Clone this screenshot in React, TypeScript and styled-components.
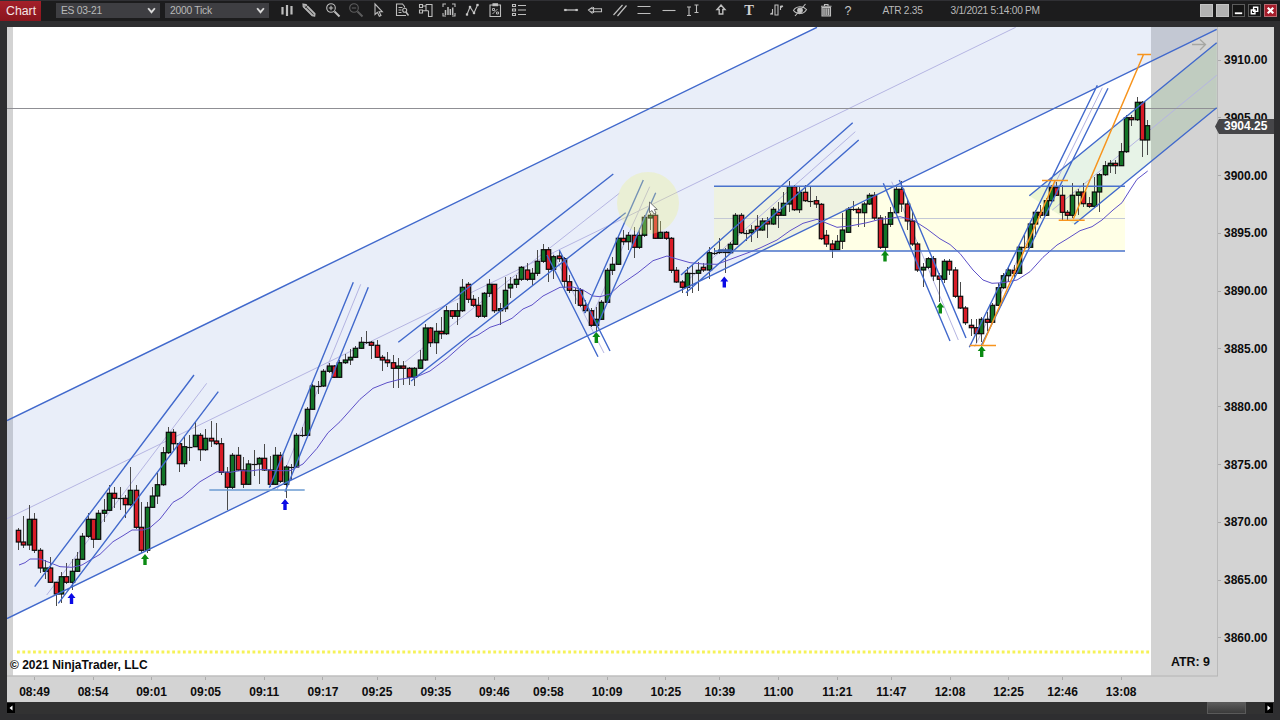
import styled, { createGlobalStyle, css } from "styled-components";
import type { ReactNode } from "react";

type Kind = "g" | "r" | "d";
// kind, wick top, body top, body bottom, wick bottom
type Candle = [Kind, number, number, number, number];
type Line = [number, number, number, number];

const candles: Candle[] = [
  ["r", 528, 530.3, 542, 550], ["r", 516, 542, 545, 548], ["g", 505, 519.3, 545, 550], ["r", 513, 519.3, 550.3, 553],
  ["r", 548, 550.3, 568, 573], ["g", 560, 568, 571.3, 579], ["r", 557, 568, 582.3, 583], ["r", 582, 582.3, 594, 606],
  ["g", 572, 576.7, 594, 603], ["r", 563, 576.7, 582.3, 584], ["g", 559, 571.3, 582.3, 590], ["g", 552, 559.3, 571.3, 572],
  ["g", 533, 536.3, 559.3, 560], ["g", 513, 519.3, 536.3, 538], ["r", 519, 519.3, 539.3, 548], ["g", 510, 513.3, 539.3, 540],
  ["g", 499, 510.3, 513.3, 522], ["g", 485, 493.3, 510.3, 511], ["r", 487, 493.3, 498.3, 508], ["d", 487, 498.3, 498.3, 510],
  ["r", 495, 498.3, 504.7, 518], ["g", 467, 490.3, 504.7, 506], ["r", 485, 490.3, 527.3, 529], ["r", 502, 527.3, 550.3, 553],
  ["g", 502, 507.3, 550.3, 553], ["g", 487, 496, 507.3, 508], ["g", 473, 484.7, 496, 504], ["g", 447, 452.7, 484.7, 486],
  ["g", 427, 432.3, 452.7, 454], ["r", 429, 432.3, 443.7, 450], ["r", 442, 443.7, 463.7, 472], ["g", 437, 446.7, 463.7, 467],
  ["d", 435, 446.7, 446.7, 461], ["g", 422, 435.3, 446.7, 447], ["r", 433, 435.3, 449.7, 461], ["g", 429, 438.3, 449.7, 451],
  ["r", 421, 438.3, 441, 447], ["r", 423, 441, 443.7, 445], ["r", 438, 443.7, 472.3, 475], ["r", 467, 472.3, 487.3, 510],
  ["g", 453, 455.3, 487.3, 489], ["r", 447, 455.3, 470, 471], ["r", 457, 470, 484.3, 488], ["g", 460, 464, 484.3, 485],
  ["d", 450, 464, 464, 476], ["g", 457, 458.3, 464, 484], ["r", 444, 458.3, 470, 471], ["r", 456, 470, 484.3, 487],
  ["g", 447, 455.3, 484.3, 485], ["r", 452, 455.3, 481.3, 483], ["g", 465, 467, 484.3, 498], ["d", 464, 467, 467, 480],
  ["g", 433, 435.3, 467, 468], ["d", 427, 435.3, 435.3, 437], ["g", 407, 409.3, 435.3, 436], ["g", 384, 386, 409.3, 410],
  ["d", 381, 386, 386, 394], ["g", 369, 371.3, 386, 387], ["g", 363, 366, 371.3, 373], ["r", 365, 366, 377.3, 378],
  ["g", 360, 362.7, 377.3, 378], ["g", 354, 360, 362.7, 364], ["g", 349, 357.3, 360, 365], ["g", 346, 348.3, 357.3, 358],
  ["g", 337, 342.3, 348.3, 349], ["d", 331, 342.3, 342.3, 344], ["r", 341, 342.3, 345.3, 359], ["r", 340, 345.3, 357.3, 358],
  ["r", 355, 357.3, 360, 371], ["r", 352, 360, 362.7, 367], ["r", 355, 362.7, 368.3, 388], ["g", 358, 366, 368.3, 388],
  ["r", 361, 366, 368.3, 385], ["r", 367, 368.3, 377.3, 385], ["g", 367, 368.3, 377.3, 386], ["g", 350, 360, 368.3, 369],
  ["g", 324, 328, 360, 361], ["r", 327, 328, 342.7, 347], ["g", 323, 331.3, 342.7, 354], ["r", 317, 331.3, 333.7, 339],
  ["g", 306, 310.7, 333.7, 335], ["r", 310, 310.7, 316.3, 319], ["g", 303, 310.7, 316.3, 325], ["g", 279, 287.3, 310.7, 312],
  ["r", 282, 284.3, 299.3, 303], ["r", 295, 299.3, 305.3, 307], ["r", 297, 305.3, 316.3, 318], ["g", 292, 293.3, 316.3, 318],
  ["g", 279, 284.3, 293.3, 297], ["r", 284, 284.3, 310.7, 313], ["g", 303, 308.7, 310.7, 325], ["g", 277, 290.3, 308.7, 312],
  ["g", 277, 284.3, 288, 298], ["g", 275, 279.3, 284.3, 288], ["g", 266, 267.3, 279.3, 281], ["r", 263, 270, 279.3, 281],
  ["g", 268, 273.3, 279.3, 285], ["g", 250, 261.3, 273.3, 276], ["g", 244, 249.7, 261.3, 263], ["r", 247, 249.7, 269.3, 282],
  ["g", 255, 256.7, 269.3, 279], ["r", 250, 256, 258.7, 262], ["r", 257, 258.7, 281.3, 288], ["r", 275, 281.7, 290.3, 293],
  ["d", 288, 290.3, 290.3, 304], ["r", 288, 290.3, 305.3, 307], ["r", 300, 305.3, 310.7, 313], ["r", 308, 310.7, 325.3, 327],
  ["g", 307, 319.3, 325.3, 332], ["g", 300, 302.3, 319.3, 320], ["g", 268, 270.3, 302.3, 303], ["g", 257, 264.3, 270.3, 275],
  ["g", 236, 238.3, 264.3, 265], ["r", 230, 238.3, 241.7, 245], ["g", 232, 235.3, 241.7, 250], ["r", 227, 235.3, 247.3, 258],
  ["g", 228, 235.3, 247.3, 249], ["g", 215, 217.3, 235.3, 237], ["g", 213, 215.3, 218, 230], ["r", 213, 215.3, 238.3, 239],
  ["g", 221, 232.3, 238.3, 239], ["r", 231, 232.3, 238.3, 240], ["r", 237, 238.3, 270.3, 273], ["r", 267, 270.3, 282, 283],
  ["r", 280, 282, 287.3, 293], ["g", 267, 273.3, 287.3, 296], ["d", 265, 273.3, 273.3, 293], ["g", 262, 270.3, 273.3, 291],
  ["r", 263, 267.3, 270, 272], ["g", 247, 252.7, 270, 279], ["d", 248, 252.7, 252.7, 255], ["d", 238, 252.3, 252.3, 254],
  ["d", 248, 252.3, 252.3, 273], ["g", 242, 244.3, 252.7, 254], ["g", 213, 215.3, 244.3, 245], ["r", 213, 215.3, 232.7, 234],
  ["d", 230, 232.7, 232.7, 241], ["g", 225, 230, 232.7, 242], ["r", 215, 226.3, 230, 238], ["g", 218, 221, 230, 231],
  ["r", 217, 221, 224, 238], ["g", 207, 209.3, 224, 225], ["r", 202, 212.3, 215.3, 228], ["g", 192, 203.3, 215.3, 216],
  ["g", 181, 186.7, 204, 212], ["r", 185, 186.7, 209.7, 211], ["g", 187, 192.3, 209.7, 213], ["r", 185, 192.3, 200.7, 202],
  ["d", 187, 200.7, 200.7, 207], ["r", 196, 200.7, 204, 208], ["r", 203, 204.3, 238.7, 240], ["r", 230, 235.3, 244, 247],
  ["r", 240, 244, 249.7, 258], ["g", 235, 241.3, 249.7, 250], ["g", 213, 230, 241.3, 249], ["g", 207, 209.3, 232.3, 233],
  ["d", 201, 209.3, 209.3, 211], ["r", 207, 209.3, 212.7, 227], ["g", 202, 204, 212.7, 227], ["g", 193, 195.3, 204, 205],
  ["r", 192, 195.3, 218, 220], ["r", 215, 218, 247.3, 249], ["g", 216, 224.3, 247.3, 252], ["g", 207, 212.7, 224.3, 227],
  ["g", 185, 189.3, 212.7, 214], ["r", 181, 189.3, 204, 212], ["r", 200, 204, 221, 230], ["r", 212, 221, 244, 246],
  ["r", 242, 244, 270, 272], ["g", 263, 267.3, 270, 287], ["g", 257, 258.7, 267.3, 269], ["r", 256, 258.7, 276, 281],
  ["r", 273, 276, 279.3, 302], ["g", 259, 261.3, 279.3, 283], ["r", 259, 261.3, 270, 275], ["r", 267, 270, 296.3, 298],
  ["r", 282, 296.3, 308, 309], ["r", 306, 308, 322.7, 325], ["r", 319, 325.3, 327.7, 336], ["r", 319, 327.7, 333.7, 343],
  ["g", 317, 319.3, 333.7, 342], ["r", 312, 319.3, 322.3, 331], ["g", 303, 305.3, 322.3, 323], ["g", 283, 287.7, 305.3, 306],
  ["g", 273, 275.7, 287.7, 289], ["g", 267, 270, 275.7, 282], ["r", 265, 270.3, 273.3, 278], ["g", 246, 247.3, 273.3, 274],
  ["d", 235, 247.3, 247.3, 250], ["g", 222, 224, 247.3, 248], ["g", 210, 212.3, 224, 237], ["r", 205, 212.3, 215.3, 218],
  ["g", 198, 200.7, 215.3, 216], ["g", 185, 187.7, 200.7, 202], ["r", 182, 187.7, 195.3, 196], ["r", 185, 195.3, 212.3, 220],
  ["r", 210, 212.3, 215.3, 220], ["g", 183, 195.3, 215.3, 218], ["g", 189, 192, 195.3, 215], ["r", 183, 192, 203.7, 207],
  ["r", 197, 203.7, 206.3, 208], ["g", 177, 192, 206.3, 208], ["g", 173, 174.7, 192, 212], ["g", 161, 165.7, 174.7, 176],
  ["g", 160, 163.3, 165.7, 173], ["r", 160, 163.3, 165.7, 174], ["g", 143, 151.7, 165.7, 166], ["g", 115, 117.7, 151.7, 153],
  ["r", 115, 117.7, 119.7, 126], ["g", 97, 102.3, 119.7, 121], ["r", 101, 102.3, 140, 157], ["g", 120, 125.7, 140, 155],
];

const average =
  "19,565 25,562.7 30,559 40,559 50,562.7 60,566.7 72,567.3 82,565 92,559 100,554.3 113,541.7 123,535.7 132,530 143,530 150,527.7 160,519 173,502.3 182,497.3 200,481.7 217,471.7 230,472.3 240,470.7 250,471 263,469.3 275,470.7 290,470.7 303,464 317,448.3 328,432.7 340,421.7 360,399.3 373,388.3 387,382.7 400,379.3 417,376.7 430,371 447,358.3 460,346.7 470,338.3 478,335 490,327.3 500,324 512,318.3 523,309 532,305 543,296 560,287.3 573,287 583,290 593,296 600,296.7 610,294 620,285 638,272.7 653,260.7 667,256 677,259 690,262.7 703,264 717,264.3 733,258.3 750,252 760,248 777,240 790,230.7 803,223.3 817,219.3 827,223.3 837,227.3 850,226 867,222.7 880,219.3 890,218.3 900,216.7 913,220 927,229 940,238.8 950,244.5 960,253.5 973,270 983,280 992,283.3 1003,282.7 1017,280 1030,271.7 1043,257.3 1057,245 1067,239 1080,230.7 1092,226.7 1102,220 1113,210 1122,202.7 1130,190 1137,179.3 1147.7,171";

const trendLines: Line[] = [
  [7, 420.5, 817, 27.3],
  [7, 618.5, 1216.7, 29.3],
  [34.7, 586.7, 194, 375],
  [58.3, 603.3, 218.3, 391.7],
  [269.3, 487.7, 353.3, 282.3],
  [285, 491.7, 368.3, 287.3],
  [398.3, 342.3, 613.3, 174],
  [411, 381, 625.7, 212.7],
  [547, 255, 598, 356.7],
  [559.3, 250, 610, 351],
  [584.5, 313.3, 643.3, 180],
  [596.7, 326.7, 655.7, 192.7],
  [681, 275, 852.7, 122.7],
  [686, 292.7, 858.7, 140],
  [883.3, 183.3, 950, 341],
  [899.3, 180, 966, 338],
  [969.3, 347.3, 1097.3, 85.3],
  [981.5, 345, 1108, 88.3],
  [1029.3, 195.7, 1216.7, 42.7],
  [1074.3, 224.3, 1216.7, 107.7],
];

const midLines: Line[] = [
  [7, 518.7, 1015.7, 27.3],
  [46.7, 595, 206.7, 383.3],
  [277, 490, 360.7, 284.3],
  [405, 362, 619.3, 193.3],
  [553, 253, 604, 353],
  [591, 318, 649.7, 186.7],
  [684, 283.5, 855.3, 131.7],
  [891.7, 181.7, 958.3, 340],
  [974.7, 346.7, 1102.3, 87.7],
  [1052.3, 210, 1216.7, 75.3],
];

const targetLines: Line[] = [
  [969.7, 345.6, 996, 345.6],
  [982.7, 344.5, 1055, 180.7],
  [1042, 180.6, 1068, 180.6],
  [1058.7, 220.3, 1084.7, 220.3],
  [1073.3, 219, 1143.5, 54.5],
  [1137.3, 54.4, 1151, 54.4],
];

const signals: [number, number, string][] = [
  [71.5, 593, "#0a0ae6"],
  [285, 499, "#0a0ae6"],
  [724.3, 276.5, "#0a0ae6"],
  [145, 554, "#0a8a12"],
  [596.3, 332, "#0a8a12"],
  [885, 250.5, "#0a8a12"],
  [940.3, 302.5, "#0a8a12"],
  [981.7, 346, "#0a8a12"],
];

const prices = ["3910.00", "3905.00", "3900.00", "3895.00", "3890.00", "3885.00", "3880.00", "3875.00", "3870.00", "3865.00", "3860.00"];

// label and the distance from the previous label
const times: [string, number][] = [
  ["08:49", 27.5], ["08:54", 58.5], ["09:01", 58.5], ["09:05", 54.2], ["09:11", 58.6], ["09:17", 58.7], ["09:25", 54.1],
  ["09:35", 58.8], ["09:46", 58.6], ["09:58", 54], ["10:09", 58.6], ["10:25", 58.8], ["10:39", 54.1], ["11:00", 58.6],
  ["11:21", 58.8], ["11:47", 54], ["12:08", 58.7], ["12:25", 58.6], ["12:46", 54], ["13:08", 58.6],
];

const barX = (i: number) => Math.round(18.1 + i * 5.352) + 0.5;

const segment = ([x1, y1, x2, y2]: Line) => `M${x1} ${y1}L${x2} ${y2}`;

// icon drawing and the space before it
const tools: [ReactNode, number][] = [
  [<path key="i" d="M3.5 5v7.5M8 3v11M12.5 4v8.5" strokeWidth="2.2" />, 0],
  [<g key="i"><path d="M2 2l3 .6 9 9-.3 2.6-2.5-.5-9-9z" fill="#9c9c9c" /><path d="M4 6l3-3M4.5 4.5l8 8" stroke="#222" strokeWidth=".7" /></g>, 6],
  [<g key="i"><circle cx="6" cy="6" r="4.3" /><path d="M6 3.8v4.4M3.8 6h4.4" /><path d="M9.5 9.5l5 5" strokeWidth="2" /></g>, 7.5],
  [<g key="i" opacity=".4"><circle cx="6" cy="6" r="4.3" /><path d="M3.8 6h4.4" /><path d="M9.5 9.5l5 5" strokeWidth="2" /></g>, 7],
  [<path key="i" d="M5 2v10.5l2.4-2.2 1.9 4 1.7-.8-1.9-3.8h3.2z" />, 6],
  [<g key="i"><path d="M10.5 5.5v-1L8.500 2h-6v11.500H12" /><path d="M4.500 5.500h4M4.500 8h3M4.500 10.500h3" /><circle cx="10.700" cy="8.200" r="2" /><path d="M12 10l2.500 3.500" strokeWidth="1.500" /></g>, 8],
  [<path key="i" d="M1.500 2.500h3v3h-3zM1.500 8h3v3h-3zM4.500 4H8M8 2.500v6M4.500 8.800H10.500M8 2.500h6v12h-3.500V8.800" />, 8],
  [<g key="i"><path d="M2 5V2h3M11 2h3v3M2 11v3h3M14 11v3h-3" /><path d="M4.500 13V8M7 13V5M9.300 13V7M11.700 13V5.500" strokeWidth="1.500" /></g>, 7],
  [<g key="i"><path d="M3 12.500L6 5l4 6 3.500-8" /><path d="M2 11.500h2v2H2zM5 4h2v2H5zM9 10h2v2H9zM12.500 2h2v2h-2z" fill="#c8c8c8" strokeWidth=".3" /></g>, 7.5],
  [<g key="i"><path d="M3 3h10.500v11.500H3z" /><path d="M6 1.800h4.500v2H6z" fill="#c8c8c8" /><path d="M5.500 12l5-5M5.500 6.500h2v2h-2zM9.500 10h2v2h-2z" strokeWidth=".9" /></g>, 7],
  [<g key="i"><path d="M1.500 2.500h3v2h-3zM1.500 7h3v2h-3zM1.500 11.500h3v2h-3z" /><path d="M7 3.500h8M7 8h8M7 12.500h8" /></g>, 8],
  [<g key="i"><path d="M2 8h12" strokeWidth="1.300" /><path d="M1.200 7h2.300v2H1.200zM12.500 7h2.300v2h-2.300z" fill="#c8c8c8" strokeWidth=".2" /></g>, 36],
  [<path key="i" d="M1.500 8L5 5.500v1.300h9.500v3H5v1.200zM6.500 5v6" />, 8],
  [<path key="i" d="M1.500 13L10.500 3M5.500 14l9-10.500" strokeWidth="1.200" />, 8.5],
  [<path key="i" d="M1.500 4.500h13M1.500 11.500h13" />, 8.5],
  [<path key="i" d="M1.500 8.500h13" />, 9],
  [<path key="i" d="M2 5h4M4 5v8.500M2 13.500h4M9.500 3h4M11.500 3v7.500M9.500 10.500h4" />, 8],
  [<path key="i" d="M8 3l4 4.500H9.800V12H6.200V7.500H4z" strokeWidth="1.400" />, 12],
  [<text key="i" x="8" y="13.2" textAnchor="middle" fontFamily="Liberation Serif, serif" fontWeight="700" fontSize="14.5" fill="#d0d0d0" stroke="none">T</text>, 11.5],
  [<path key="i" d="M7 3h3v10H7zM2 12h2.500V7M4.500 12.500L3 11M12.500 4v4M15 4l-2.500 1.800M12.500 4H15" />, 11],
  [<g key="i"><path d="M1.500 8.500C4 4 11 3.500 14.500 7.500 12 12.500 5 13 1.500 8.500z" /><circle cx="8" cy="8.300" r="2.300" fill="#c8c8c8" /><path d="M3 14L13.500 2" /></g>, 8],
  [<g key="i"><path d="M4 5.500h8.500V14H4z" fill="#666" /><path d="M3 4.300h10.500M6.500 4V2.500h3.500V4M6 6.500v6.500M8.200 6.500v6.500M10.400 6.500v6.500" /></g>, 10],
  [<text key="i" x="8" y="13" textAnchor="middle" fontFamily="Liberation Sans, sans-serif" fontSize="12.5" fill="#c8c8c8" stroke="none">?</text>, 6],
];

const App = () => {
  return (
    <Window>
      <GlobalStyle />
      <Toolbar>
        <Title>Chart</Title>
        <Select $offset={15}>
          ES 03-21
          <Chevron />
        </Select>
        <Select $offset={5}>
          2000 Tick
          <Chevron />
        </Select>
        <Tools>
          {tools.map(([icon, gap], i) => (
            <Tool key={i} $gap={gap} viewBox="0 0 16 16">
              {icon}
            </Tool>
          ))}
        </Tools>
        <Status $offset={27}>ATR 2.35</Status>
        <Status $offset={28}>3/1/2021 5:14:00 PM</Status>
        <WindowButtons>
          <WindowButton $tone="light" />
          <WindowButton $tone="light" />
          <WindowButton $tone="dark">
            <ButtonIcon viewBox="0 0 12 12"><path d="M2 9h8" strokeWidth="2" /></ButtonIcon>
          </WindowButton>
          <WindowButton $tone="dark">
            <ButtonIcon viewBox="0 0 12 12"><path d="M5 2.500h4.500V7H5zM2.500 5.500h4v4h-4z" strokeWidth="1.500" /></ButtonIcon>
          </WindowButton>
          <WindowButton $tone="red">
            <ButtonIcon viewBox="0 0 12 12"><path d="M3 3l6 6M9 3l-6 6" strokeWidth="2.400" /></ButtonIcon>
          </WindowButton>
        </WindowButtons>
      </Toolbar>
      <ChartPanel>
        <Plot>
          <PriceChart />
          <Copyright>© 2021 NinjaTrader, LLC</Copyright>
          <AtrNote>ATR: 9</AtrNote>
        </Plot>
        <PriceAxis>
          {prices.map((price) => (
            <Price key={price}>{price}</Price>
          ))}
          <LastPrice>
            <TagShape viewBox="0 0 59 15">
              <path d="M0 7.500L4 0H59V15H4z" fill="#464649" />
            </TagShape>
            <TagText>3904.25</TagText>
          </LastPrice>
        </PriceAxis>
        <TimeAxis>
          {times.map(([time, step], i) => (
            <Time key={time} $gap={i === 0 ? step - 20 : step - 40}>{time}</Time>
          ))}
        </TimeAxis>
      </ChartPanel>
      <ScrollBar>
        <ScrollButton><Arrow viewBox="0 0 8 10"><path d="M5.500 2.500v5L2.500 5z" /></Arrow></ScrollButton>
        <Thumb />
        <ScrollButton><Arrow viewBox="0 0 8 10"><path d="M2.500 2.500v5l3-2.500z" /></Arrow></ScrollButton>
      </ScrollBar>
    </Window>
  );
};

export default App;

const Chevron = () => (
  <ChevronIcon viewBox="0 0 8 6">
    <path d="M1 1l3 3.500L7 1" fill="none" stroke="#d8d8d8" strokeWidth="1.700" />
  </ChevronIcon>
);

const PriceChart = () => (
  <ChartSvg viewBox="7 27 1211 650">
    <rect x="13" y="27" width="1138" height="648.5" fill="#fff" />
    <path d="M7 420.500L817 27H1216.700V29.300L7 618.500z" fill="rgba(100,135,215,.145)" />
    <path d="M1029.300 195.700L1216.700 42.700V107.700L1074.300 224.300z" fill="rgba(60,160,60,.12)" />
    <rect x="714" y="186.3" width="411" height="64.5" fill="rgba(255,255,150,.24)" />
    <path d="M714 218.500H1125" stroke="#c3c8d6" />
    <path d={midLines.map(segment).join("")} stroke="#b5b5e2" strokeWidth="1" />
    <path d="M7 108.500H1217" stroke="#8f8f94" />

    {candles.map(([kind, high, top, bottom, low], i) => {
      const x = barX(i);
      return (
        <g key={i}>
          <path d={`M${x} ${high}V${low}`} stroke="#4a4a4a" />
          {kind === "d" ? (
            <path d={`M${x - 3} ${Math.round(top) + 0.5}h6`} stroke="#111" strokeWidth="1.2" />
          ) : (
            <rect
              x={x - 2.2}
              y={top}
              width="4.4"
              height={bottom - top}
              fill={kind === "g" ? "#137427" : "#d81c27"}
              stroke="#0a0a0a"
              strokeWidth="1.2"
            />
          )}
        </g>
      );
    })}

    <polyline points={average} fill="none" stroke="#5d50c8" strokeWidth="1" />
    <path d={trendLines.map(segment).join("")} stroke="#4169cc" strokeWidth="1.4" />
    <path d="M714 186.300H1125M714 250.900H1125" stroke="#4a73cc" strokeWidth="1.5" />
    <path d="M718 250.500H732" stroke="#3c5fa8" strokeWidth="2.5" />
    <path d="M209.300 490H304.700" stroke="#6b9bd2" strokeWidth="1.4" />
    <path d={targetLines.map(segment).join("")} stroke="#f7941d" strokeWidth="1.5" />

    {signals.map(([x, y, color]) => (
      <path key={x} d={`M${x} ${y}l4 5h-2.300v6h-3.400v-6h-2.300z`} fill={color} />
    ))}

    <circle cx="648" cy="203" r="31" fill="rgba(238,242,130,.3)" />
    <path d="M649.500 202v10.500l2.500-2 2 3.500 2-.9-1.700-3.600h3z" fill="#fff" stroke="#555" strokeWidth=".8" />
    <path d="M1192 44.500H1205M1200 39.500L1205.500 44.500L1200 50" fill="none" stroke="#a6a6a2" strokeWidth="1.3" />

    <path d="M17 652H1150" stroke="#f6f257" strokeWidth="2.8" strokeDasharray="2.8 2.552" />
    <path d="M7 676H1218M1217.700 27V676" stroke="#b4b4b4" />
  </ChartSvg>
);

const GlobalStyle = createGlobalStyle`
  * {
    box-sizing: border-box;
  }

  body {
    margin: 0;
    overflow: hidden;
    background: #2d2d2f;
    font-family: "Liberation Sans", Arial, sans-serif;
  }
`;

const Window = styled.div`
  width: 1280px;
  height: 720px;
  display: flex;
  flex-direction: column;
  background: #2e2e30;
`;

const Toolbar = styled.div`
  height: 21px;
  flex-shrink: 0;
  display: flex;
  align-items: center;
  background: #1c1c1d;
  border-top: 1px solid #303034;
  padding-bottom: 2px;
  margin-bottom: 6px;
`;

const Title = styled.div`
  width: 41px;
  height: 20px;
  padding-left: 6px;
  align-self: flex-start;
  line-height: 20px;
  font-size: 12.3px;
  color: #f3e6e6;
  background: linear-gradient(#a3202a, #8a151d);
`;

const Select = styled.div<{ $offset: number }>`
  width: 104px;
  height: 15px;
  margin-left: ${({ $offset }) => $offset}px;
  padding: 0 4px 0 5px;
  display: flex;
  align-items: center;
  justify-content: space-between;
  font-size: 10.3px;
  letter-spacing: -0.25px;
  color: #b9b9b9;
  background: #3e3e42;
`;

const ChevronIcon = styled.svg`
  width: 9px;
  height: 7px;
`;

const Tools = styled.div`
  display: flex;
  align-items: center;
  margin-left: 10px;
`;

const Tool = styled.svg<{ $gap: number }>`
  width: 16px;
  height: 16px;
  flex-shrink: 0;
  margin-left: ${({ $gap }) => $gap}px;
  fill: none;
  stroke: #bdbdbd;
  stroke-width: 1.1;
`;

const Status = styled.div<{ $offset: number }>`
  margin-left: ${({ $offset }) => $offset}px;
  font-size: 10.2px;
  letter-spacing: -0.28px;
  color: #b9b9b9;
  white-space: nowrap;
`;

const WindowButtons = styled.div`
  display: flex;
  gap: 3px;
  margin-left: auto;
  margin-right: 3px;
`;

const tones = {
  light: css`
    background: #b2b2b2;
    border-color: #c4c4c4;
  `,
  dark: css`
    background: #151515;
    border-color: #5c5c5c;
  `,
  red: css`
    background: #a51c2a;
    border-color: #b76a70;
  `,
};

const WindowButton = styled.div<{ $tone: keyof typeof tones }>`
  width: 13px;
  height: 13px;
  display: flex;
  border: 1px solid;
  ${({ $tone }) => tones[$tone]}
`;

const ButtonIcon = styled.svg`
  width: 11px;
  height: 11px;
  fill: none;
  stroke: #fff;
`;

const ChartPanel = styled.div`
  width: 1267px;
  height: 675px;
  margin-left: 7px;
  flex-shrink: 0;
  display: grid;
  grid-template-columns: 1211px 1fr;
  grid-template-rows: 650px 1fr;
  background: #d3d3d3;
  color: #0c0c0c;
  font-size: 12px;
  font-weight: 700;
`;

const Plot = styled.div`
  position: relative;
`;

const ChartSvg = styled.svg`
  display: block;
  width: 1211px;
  height: 650px;
`;

const Copyright = styled.div`
  position: absolute;
  left: 3px;
  bottom: 5px;
`;

const AtrNote = styled.div`
  position: absolute;
  right: 8px;
  bottom: 8px;
  font-size: 12.4px;
`;

const PriceAxis = styled.div`
  position: relative;
  height: 618px;
  padding-top: 26px;
  display: flex;
  flex-direction: column;
  justify-content: space-between;
`;

const Price = styled.div`
  height: 14px;
  line-height: 14px;
  display: flex;
  align-items: center;
  gap: 3px;

  &::before {
    content: "";
    width: 3px;
    height: 1px;
    background: #aaa;
  }
`;

const LastPrice = styled.div`
  position: absolute;
  left: -3px;
  top: 92px;
  width: 59px;
  height: 15px;
`;

const TagShape = styled.svg`
  display: block;
  width: 59px;
  height: 15px;
`;

const TagText = styled.div`
  margin-top: -15px;
  padding-left: 9px;
  line-height: 15px;
  color: #fff;
`;

const TimeAxis = styled.div`
  grid-column: 1 / -1;
  display: flex;
`;

const Time = styled.div<{ $gap: number }>`
  width: 40px;
  margin-left: ${({ $gap }) => $gap}px;
  flex-shrink: 0;
  display: flex;
  flex-direction: column;
  align-items: center;
  line-height: 14px;

  &::before {
    content: "";
    width: 1px;
    height: 3px;
    margin-bottom: 5px;
    background: #aaa;
  }
`;

const ScrollBar = styled.div`
  display: flex;
  align-items: center;
  height: 12px;
  margin: 0 7px;
  background: #323232;
`;

const ScrollButton = styled.div`
  width: 8px;
  height: 10px;
  display: flex;
  background: #000;
`;

const Arrow = styled.svg`
  width: 8px;
  height: 10px;
  fill: #fff;
`;

const Thumb = styled.div`
  width: 39px;
  height: 12px;
  margin-left: auto;
  margin-right: 19px;
  border: 1px solid #5a5a5a;
  background: linear-gradient(#5a5a5a, #3a3a3a);
`;
